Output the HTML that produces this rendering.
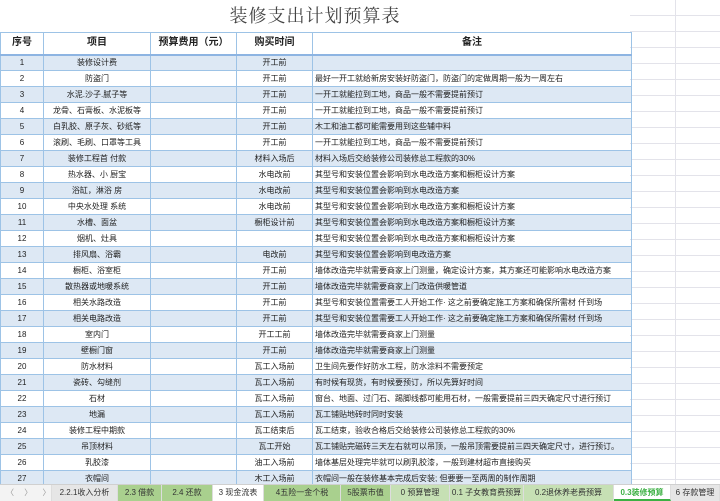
<!DOCTYPE html><html><head><meta charset="utf-8"><style>
*{margin:0;padding:0;box-sizing:border-box}
body{width:720px;height:501px;overflow:hidden;background:#fff;font-family:"Liberation Sans","Noto Sans CJK SC",sans-serif;position:relative}
.title{position:absolute;left:0;top:0;width:630px;height:32px;text-align:center;font:18px/32px "Liberation Serif","Noto Serif CJK SC",serif;color:#444;letter-spacing:1px}
.grid{position:absolute;left:630px;top:0;width:90px;height:490px;background:
repeating-linear-gradient(to bottom,transparent 0,transparent 15px,#e3e3ea 15px,#e3e3ea 16px);}
.grid:before{content:"";position:absolute;left:45px;top:0;width:1px;height:100%;background:#e3e3ea}
table{position:absolute;left:0;top:32px;border-collapse:collapse;table-layout:fixed;width:631px}
td,th{border:1px solid #9dc3e6;font-size:8px;color:#222;height:16px;line-height:14px;white-space:nowrap;overflow:hidden;text-align:center;padding:0}
th{height:22px;font-size:10px;font-weight:bold;border-bottom:2px solid #8db4e2}
td.n{text-align:left;padding-left:2px}
tr.b td{background:#dde8f4}
.tabs{position:absolute;left:0;top:484px;width:720px;height:17px;background:#f3f3f3;border-top:1px solid #d0d0d0;font-size:8px}
.tabs div{position:absolute;top:0;height:16px;line-height:16px;text-align:center;color:#333;border-right:1px solid #ddd;white-space:nowrap;overflow:hidden}
</style></head><body>
<div class="title">装修支出计划预算表</div>
<div class="grid"></div>
<table>
<colgroup><col style="width:43px"><col style="width:107px"><col style="width:86px"><col style="width:76px"><col style="width:319px"></colgroup>
<tr><th>序号</th><th>项目</th><th>预算费用（元）</th><th>购买时间</th><th>备注</th></tr>
<tr class="b"><td>1</td><td>装修设计费</td><td></td><td>开工前</td><td class="n"></td></tr>
<tr><td>2</td><td>防盗门</td><td></td><td>开工前</td><td class="n">最好一开工就给新房安装好防盗门，防盗门的定做周期一般为一周左右</td></tr>
<tr class="b"><td>3</td><td>水泥.沙子.腻子等</td><td></td><td>开工前</td><td class="n">一开工就能拉到工地，商品一般不需要提前预订</td></tr>
<tr><td>4</td><td>龙骨、石膏板、水泥板等</td><td></td><td>开工前</td><td class="n">一开工就能拉到工地，商品一般不需要提前预订</td></tr>
<tr class="b"><td>5</td><td>白乳胶、原子灰、砂纸等</td><td></td><td>开工前</td><td class="n">木工和油工都可能需要用到这些辅中料</td></tr>
<tr><td>6</td><td>滚刷、毛刷、口罩等工具</td><td></td><td>开工前</td><td class="n">一开工就能拉到工地，商品一般不需要提前预订</td></tr>
<tr class="b"><td>7</td><td>装修工程首 付款</td><td></td><td>材料入场后</td><td class="n">材料入场后交给装修公司装修总工程款的30%</td></tr>
<tr><td>8</td><td>热水器、小 厨宝</td><td></td><td>水电改前</td><td class="n">其型号和安装位置会影响到水电改造方案和橱柜设计方案</td></tr>
<tr class="b"><td>9</td><td>浴缸，淋浴 房</td><td></td><td>水电改前</td><td class="n">其型号和安装位置会影响到水电改造方案</td></tr>
<tr><td>10</td><td>中央水处理 系统</td><td></td><td>水电改前</td><td class="n">其型号和安装位置会影响到水电改造方案和橱柜设计方案</td></tr>
<tr class="b"><td>11</td><td>水槽、面盆</td><td></td><td>橱柜设计前</td><td class="n">其型号和安装位置会影响到水电改造方案和橱柜设计方案</td></tr>
<tr><td>12</td><td>烟机、灶具</td><td></td><td></td><td class="n">其型号和安装位置会影响到水电改造方案和橱柜设计方案</td></tr>
<tr class="b"><td>13</td><td>排风扇、浴霸</td><td></td><td>电改前</td><td class="n">其型号和安装位置会影响到电改造方案</td></tr>
<tr><td>14</td><td>橱柜、浴室柜</td><td></td><td>开工前</td><td class="n">墙体改造完毕就需要商家上门测量，确定设计方案，其方案还可能影响水电改造方案</td></tr>
<tr class="b"><td>15</td><td>散热器或地暖系统</td><td></td><td>开工前</td><td class="n">墙体改造完毕就需要商家上门改造供暖管道</td></tr>
<tr><td>16</td><td>相关水路改造</td><td></td><td>开工前</td><td class="n">其型号和安装位置需要工人开始工作· 这之前要确定施工方案和确保所需材 仟到场</td></tr>
<tr class="b"><td>17</td><td>相关电路改造</td><td></td><td>开工前</td><td class="n">其型号和安装位置需要工人开始工作· 这之前要确定施工方案和确保所需材 仟到场</td></tr>
<tr><td>18</td><td>室内门</td><td></td><td>开工工前</td><td class="n">墙体改造完毕就需要商家上门测量</td></tr>
<tr class="b"><td>19</td><td>壁橱门窗</td><td></td><td>开工前</td><td class="n">墙体改造完毕就需要商家上门测量</td></tr>
<tr><td>20</td><td>防水材料</td><td></td><td>瓦工入场前</td><td class="n">卫生间先要作好防水工程，防水涂料不需要预定</td></tr>
<tr class="b"><td>21</td><td>瓷砖、勾缝剂</td><td></td><td>瓦工入场前</td><td class="n">有时候有现货，有时候要预订，所以先算好时间</td></tr>
<tr><td>22</td><td>石材</td><td></td><td>瓦工入场前</td><td class="n">窗台、地面、过门石、踢脚线都可能用石材，一般需要提前三四天确定尺寸进行预订</td></tr>
<tr class="b"><td>23</td><td>地漏</td><td></td><td>瓦工入场前</td><td class="n">瓦工铺贴地砖时同时安装</td></tr>
<tr><td>24</td><td>装修工程中期款</td><td></td><td>瓦工结束后</td><td class="n">瓦工结束，验收合格后交给装修公司装修总工程款的30%</td></tr>
<tr class="b"><td>25</td><td>吊顶材料</td><td></td><td>瓦工开始</td><td class="n">瓦工铺贴完磁砖三天左右就可以吊顶，一般吊顶需要提前三四天确定尺寸，进行预订。</td></tr>
<tr><td>26</td><td>乳胶漆</td><td></td><td>油工入场前</td><td class="n">墙体基层处理完毕就可以刷乳胶漆，一般到建材超市直接购买</td></tr>
<tr class="b"><td>27</td><td>衣帽间</td><td></td><td>木工入场前</td><td class="n">衣帽间一般在装修基本完成后安装; 但要要一至两周的制作周期</td></tr>
</table>
<div class="tabs">
<div style="left:0;width:52px;color:#999;text-align:left;padding-left:6px;letter-spacing:4px">〈 〉 〉|</div>
<div style="left:52px;width:66px;background:#e6e6e6">2.2.1收入分析</div>
<div style="left:118px;width:44px;background:#a9d08e">2.3 借款</div>
<div style="left:162px;width:51px;background:#a9d08e">2.4 还款</div>
<div style="left:213px;width:51px;background:#fff">3 现金流表</div>
<div style="left:264px;width:77px;background:#a9d08e">4五险一金个税</div>
<div style="left:341px;width:50px;background:#a9d08e">5股票市值</div>
<div style="left:391px;width:59px;background:#c6e0b4">0 预算管理</div>
<div style="left:450px;width:74px;background:#c6e0b4">0.1 子女教育费预算</div>
<div style="left:524px;width:90px;background:#c6e0b4">0.2退休养老费预算</div>
<div style="left:614px;width:57px;background:#fff;color:#3cb043;font-weight:bold;border-bottom:2px solid #3cb043">0.3装修预算</div>
<div style="left:671px;width:49px;background:#e6e6e6">6 存款管理</div>
</div>
</body></html>
